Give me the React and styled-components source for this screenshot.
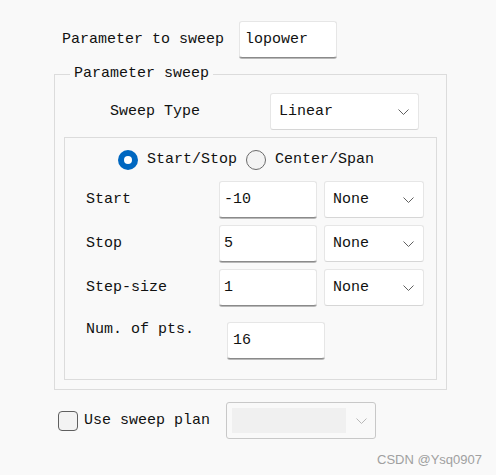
import React from 'react';
import styled, { createGlobalStyle } from 'styled-components';

const GlobalStyle = createGlobalStyle`
  html, body {
    margin: 0;
    padding: 0;
    background: #f9f9f9;
  }
  body {
    font-family: "Liberation Mono", "DejaVu Sans Mono", monospace;
    font-size: 15px;
    color: #111;
  }
`;

const Page = styled.div`
  width: 496px;
  height: 475px;
  padding-top: 21px;
  box-sizing: border-box;
  overflow: hidden;
`;

const TopRow = styled.div`
  display: flex;
  align-items: center;
  padding-left: 62px;
`;

const Label = styled.span`
  display: inline-block;
  width: ${p => p.$w || 'auto'};
  line-height: 18px;
  white-space: pre;
  align-self: ${p => (p.$top ? 'flex-start' : 'center')};
  margin-top: ${p => (p.$top ? '-1px' : '0')};
`;

const TextBox = styled.div`
  box-sizing: border-box;
  width: 98px;
  height: 37px;
  margin-left: ${p => p.$ml || '0'};
  padding-left: ${p => p.$pl || '5px'};
  display: flex;
  align-items: center;
  background: #fff;
  border: 1px solid #e6e6e6;
  border-bottom: 1px solid #8a8a8a;
  border-radius: 3px;
  box-shadow: 0 1px 0 #b8b8b8;
`;

const Group = styled.fieldset`
  margin: 7px 0 0 54px;
  width: 393px;
  box-sizing: border-box;
  padding: 0;
  border: 1px solid #dcdcdc;
`;

const Legend = styled.legend`
  margin-left: 15px;
  padding: 0 4px;
  line-height: 18px;
`;

const TypeRow = styled.div`
  display: flex;
  align-items: center;
  margin-top: 10px;
  padding-left: 55px;
`;

const Select = styled.div`
  box-sizing: border-box;
  width: ${p => p.$w || '100px'};
  height: 37px;
  display: flex;
  align-items: center;
  justify-content: space-between;
  padding: 0 9px 0 8px;
  background: #fff;
  border: 1px solid #e6e6e6;
  border-bottom-color: #d6d6d6;
  border-radius: 3px;
`;

const Chevron = ({ color = '#606060' }) => (
  <svg width="11" height="6" viewBox="0 0 11 6" fill="none">
    <path d="M0.5 0.5 L5.5 5.5 L10.5 0.5" stroke={color} strokeWidth="1" />
  </svg>
);

const Inner = styled.div`
  margin: 7px 9px 9px 9px;
  border: 1px solid #dcdcdc;
  padding: 12px 0 20px 21px;
`;

const RadioRow = styled.div`
  display: flex;
  align-items: center;
  padding-left: 32px;
  margin-bottom: 11px;
`;

const RadioItem = styled.label`
  display: flex;
  align-items: center;
  gap: 9px;
  margin-right: 9px;
  line-height: 20px;
`;

const RadioDot = styled.span`
  box-sizing: border-box;
  width: 20px;
  height: 20px;
  border-radius: 50%;
  background: ${p => (p.$on ? '#0067c0' : '#f3f3f3')};
  border: ${p => (p.$on ? 'none' : '1px solid #6a6a6a')};
  display: flex;
  align-items: center;
  justify-content: center;
  &::after {
    content: '';
    display: ${p => (p.$on ? 'block' : 'none')};
    width: 8px;
    height: 8px;
    border-radius: 50%;
    background: #fff;
  }
`;

const Rows = styled.div`
  display: flex;
  flex-direction: column;
  gap: 7px;
`;

const FieldRow = styled.div`
  display: flex;
  align-items: center;
  gap: 7px;
  margin-top: ${p => p.$mt || '0'};
`;

const BottomRow = styled.div`
  display: flex;
  align-items: center;
  margin-top: 12px;
  padding-left: 58px;
`;

const Check = styled.span`
  box-sizing: border-box;
  width: 20px;
  height: 20px;
  border: 1px solid #5f5f5f;
  border-radius: 4px;
  background: #f3f3f3;
  margin-right: 6px;
`;

const Combo = styled.div`
  box-sizing: border-box;
  width: 150px;
  height: 37px;
  margin-left: 16px;
  padding: 5px 8px 5px 5px;
  display: flex;
  align-items: center;
  justify-content: space-between;
  background: #f9f9f9;
  border: 1px solid #c8c8c8;
  border-radius: 3px;
`;

const ComboField = styled.div`
  width: 114px;
  height: 25px;
  background: #f0f0f0;
`;

const Footer = styled.div`
  display: flex;
  justify-content: flex-end;
  padding-right: 14px;
  margin-top: 13px;
  font-family: "Liberation Sans", Arial, sans-serif;
  font-size: 13px;
  color: #a0a0a0;
`;

const rows = [
  { name: 'Start', value: '-10' },
  { name: 'Stop', value: '5' },
  { name: 'Step-size', value: '1' },
];

export default function App() {
  return (
    <Page>
      <GlobalStyle />
      <TopRow>
        <Label $w="177px">Parameter to sweep</Label>
        <TextBox>lopower</TextBox>
      </TopRow>

      <Group>
        <Legend>Parameter sweep</Legend>
        <TypeRow>
          <Label $w="160px">Sweep Type</Label>
          <Select $w="149px">
            <span>Linear</span>
            <Chevron />
          </Select>
        </TypeRow>

        <Inner>
          <RadioRow>
            <RadioItem>
              <RadioDot $on />
              Start/Stop
            </RadioItem>
            <RadioItem>
              <RadioDot />
              Center/Span
            </RadioItem>
          </RadioRow>

          <Rows>
            {rows.map(r => (
              <FieldRow key={r.name}>
                <Label $w="126px">{r.name}</Label>
                <TextBox $pl="4px">{r.value}</TextBox>
                <Select>
                  <span>None</span>
                  <Chevron />
                </Select>
              </FieldRow>
            ))}
            <FieldRow $mt="9px">
              <Label $w="134px" $top>Num. of pts.</Label>
              <TextBox>16</TextBox>
            </FieldRow>
          </Rows>
        </Inner>
      </Group>

      <BottomRow>
        <Check />
        <Label>Use sweep plan</Label>
        <Combo>
          <ComboField />
          <Chevron color="#b8b8b8" />
        </Combo>
      </BottomRow>

      <Footer>CSDN @Ysq0907</Footer>
    </Page>
  );
}
